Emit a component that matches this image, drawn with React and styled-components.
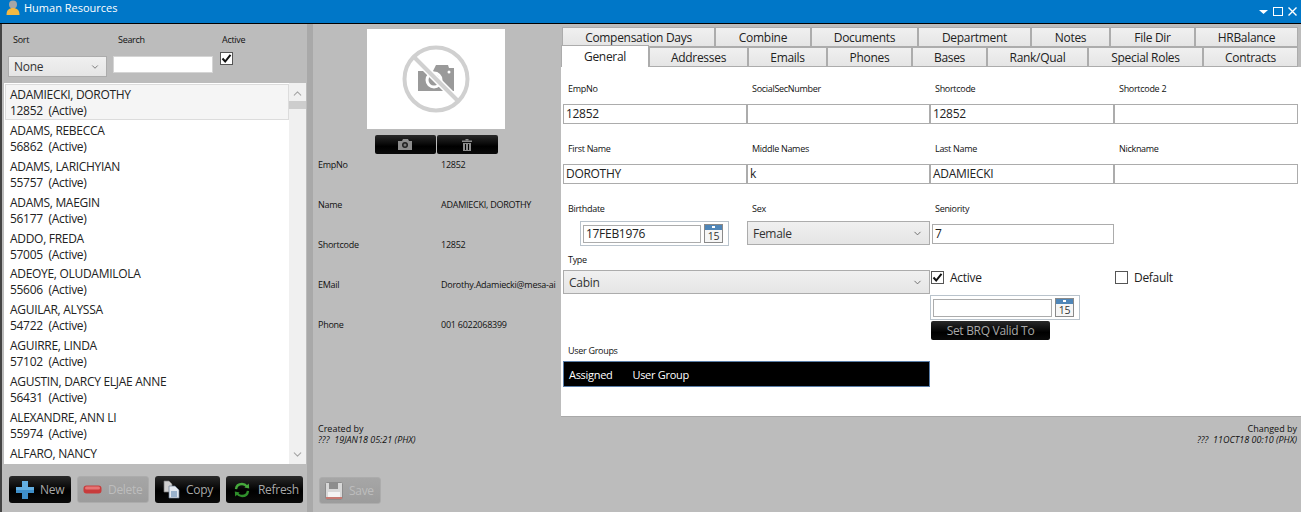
import styled, { createGlobalStyle } from "styled-components";
import { ChevronDown, ChevronUp } from "lucide-react";

const GlobalStyle = createGlobalStyle`
  html, body {
    margin: 0;
    padding: 0;
    background: #bcbcbc;
    font-family: "Open Sans", "Noto Sans", sans-serif;
    letter-spacing: -0.3px;
    overflow: hidden;
  }
`;

const people = [
  ["ADAMIECKI, DOROTHY", "12852"],
  ["ADAMS, REBECCA", "56862"],
  ["ADAMS, LARICHYIAN", "55757"],
  ["ADAMS, MAEGIN", "56177"],
  ["ADDO, FREDA", "57005"],
  ["ADEOYE, OLUDAMILOLA", "55606"],
  ["AGUILAR, ALYSSA", "54722"],
  ["AGUIRRE, LINDA", "57102"],
  ["AGUSTIN, DARCY ELJAE ANNE", "56431"],
  ["ALEXANDRE, ANN LI", "55974"],
  ["ALFARO, NANCY"],
];

const topTabs = [
  ["Compensation Days", 153],
  ["Combine", 96],
  ["Documents", 107],
  ["Department", 113],
  ["Notes", 79],
  ["File Dir", 85],
  ["HRBalance", 103],
];

const bottomTabs = [
  ["Addresses", 99],
  ["Emails", 79],
  ["Phones", 85],
  ["Bases", 75],
  ["Rank/Qual", 101],
  ["Special Roles", 115],
  ["Contracts", 95],
];

const summary = [
  ["EmpNo", "12852"],
  ["Name", "ADAMIECKI, DOROTHY"],
  ["Shortcode", "12852"],
  ["EMail", "Dorothy.Adamiecki@mesa-ai"],
  ["Phone", "001 6022068399"],
];

const Page = styled.div`
  width: 1301px;
  height: 512px;
  display: flex;
  flex-direction: column;
  overflow: hidden;
  background: #bcbcbc;
`;

const TitleBar = styled.div`
  height: 24px;
  flex: none;
  display: flex;
  align-items: center;
  padding: 0 4px 8px 6px;
  box-sizing: border-box;
  background: #0077c8;
  border-bottom: 1px solid #000;
  color: #fff;
  font-size: 11px;
`;

const TitleText = styled.span`
  margin-left: 4px;
  flex: 1;
  letter-spacing: 0;
`;

const WindowButtons = styled.div`
  display: flex;
  align-items: center;
  gap: 5px;
  margin-top: 8px;
`;

const Body = styled.div`
  flex: 1;
  min-height: 0;
  display: flex;
  border-left: 2px solid #444;
`;

const LeftPanel = styled.div`
  width: 305px;
  flex: none;
  display: flex;
  flex-direction: column;
  background: #bcbcbc;
`;

const Splitter = styled.div`
  width: 6px;
  flex: none;
  background: #a9a9a9;
`;

const Filters = styled.div`
  height: 59px;
  flex: none;
  display: grid;
  grid-template-columns: 105px 107px 1fr;
  padding-left: 6px;
`;

const SmallLabel = styled.div`
  font-size: 9px;
  line-height: 12px;
  color: #111;
`;

const FilterCol = styled.div`
  display: flex;
  flex-direction: column;
  padding-top: 10px;

  ${SmallLabel} {
    margin-left: 5px;
    height: 22px;
  }
`;

const ActiveCol = styled(FilterCol)`
  ${SmallLabel} {
    margin-left: 2px;
    height: 18px;
  }
`;

const Dropdown = styled.div`
  height: ${(p) => p.$height || 24}px;
  width: ${(p) => (p.$width ? `${p.$width}px` : "auto")};
  box-sizing: border-box;
  display: flex;
  align-items: center;
  justify-content: space-between;
  padding: 0 6px 0 5px;
  border: 1px solid #acacac;
  background: linear-gradient(#f0f0f0, #e5e5e5);
  color: #333;
  font-size: 12px;
`;

const SearchBox = styled.div`
  width: 100px;
  height: 17px;
  background: #fff;
  border: 1px solid #d5d5d5;
  box-sizing: border-box;
`;

const Check = styled.div`
  width: 13px;
  height: 13px;
  box-sizing: border-box;
  border: 1px solid #555;
  background: #fff;
  display: flex;
  align-items: center;
  justify-content: center;
  flex: none;
`;

const ListFrame = styled.div`
  height: 381px;
  flex: none;
  margin: 0 1px 0 2px;
  background: #fff;
  display: flex;
  overflow: hidden;
`;

const ListItems = styled.div`
  flex: 1;
  overflow: hidden;
  padding-top: 1px;
`;

const ListItem = styled.div`
  height: 35.9px;
  box-sizing: border-box;
  padding: 3px 0 0 5px;
  font-size: 12px;
  line-height: 16px;
  color: #222;
  background: ${(p) => (p.$selected ? "#f5f5f5" : "#fff")};
  box-shadow: ${(p) => (p.$selected ? "inset 0 0 0 1px #dcdcdc" : "none")};
  margin-left: 1px;
`;

const ItemSub = styled.div`
  white-space: pre;
`;

const ScrollTrack = styled.div`
  width: 17px;
  flex: none;
  background: #f0f0f0;
  display: flex;
  flex-direction: column;
  align-items: center;
  color: #a6a6a6;
`;

const ScrollThumb = styled.div`
  width: 100%;
  height: 8px;
  margin-top: 1px;
  background: #cdcdcd;
`;

const ScrollSpacer = styled.div`
  flex: 1;
`;

const ScrollArrow = styled.div`
  height: 14px;
  margin: ${(p) => (p.$down ? "0 0 3px" : "3px 0 0")};
  display: flex;
  align-items: center;
`;

const ActionRow = styled.div`
  display: flex;
  gap: 6px;
  padding: 12px 0 0 7px;
`;

const ActionButton = styled.div`
  width: ${(p) => p.$width}px;
  height: 27px;
  box-sizing: border-box;
  border-radius: 3px;
  display: flex;
  align-items: center;
  gap: ${(p) => p.$gap || 6}px;
  padding-left: ${(p) => p.$pad || 7}px;
  font-size: 12px;
  color: ${(p) => (p.$disabled ? "#bdbdbd" : "#a8a8a8")};
  background: ${(p) =>
    p.$disabled
      ? "linear-gradient(#a6a6a6, #9c9c9c)"
      : "linear-gradient(#2a2a2a, #000 55%, #0a0a0a)"};
  border: ${(p) => (p.$disabled ? "1px solid #acacac" : "none")};
`;

const MainPanel = styled.div`
  flex: 1;
  min-width: 0;
  display: flex;
  flex-direction: column;
`;

const MainTop = styled.div`
  height: 393px;
  flex: none;
  display: flex;
`;

const SummaryCol = styled.div`
  width: 248px;
  flex: none;
  display: flex;
  flex-direction: column;
  padding-left: 5px;
  box-sizing: border-box;
  overflow: hidden;
`;

const PhotoBlock = styled.div`
  display: flex;
  flex-direction: column;
  align-items: center;
  padding-top: 5px;
  width: 138px;
  margin-left: 49px;
`;

const Photo = styled.div`
  width: 138px;
  height: 100px;
  background: #fff;
  flex: none;
  display: flex;
  align-items: center;
  justify-content: center;
`;

const PhotoButtons = styled.div`
  display: flex;
  gap: 1px;
  margin-top: 6px;
`;

const PhotoButton = styled.div`
  width: 61px;
  height: 19px;
  border-radius: 2px;
  background: linear-gradient(#2a2a2a, #000 60%, #0a0a0a);
  display: flex;
  align-items: center;
  justify-content: center;
`;

const SummaryRows = styled.div`
  display: flex;
  flex-direction: column;
  margin-top: 5px;
`;

const SummaryRow = styled.div`
  height: 40px;
  display: grid;
  grid-template-columns: 123px 1fr;
  white-space: nowrap;
  font-size: 9px;
  line-height: 12px;
  letter-spacing: -0.25px;
  color: #111;
`;

const TabArea = styled.div`
  flex: 1;
  min-width: 0;
  display: flex;
  flex-direction: column;
  padding-top: 3px;
`;

const TabRow = styled.div`
  display: flex;
  height: 20px;
  flex: none;
  align-items: flex-end;
  padding-left: ${(p) => p.$indent || 0}px;
`;

const Tab = styled.div`
  width: ${(p) => p.$width}px;
  height: ${(p) => (p.$active ? 22 : 20)}px;
  box-sizing: border-box;
  flex: none;
  display: flex;
  align-items: center;
  justify-content: center;
  font-size: 12px;
  color: #222;
  background: ${(p) =>
    p.$active ? "#fff" : "linear-gradient(#f0f0f0, #e5e5e5)"};
  border: 1px solid #acacac;
  border-bottom: ${(p) => (p.$active ? "none" : "1px solid #acacac")};
  position: ${(p) => (p.$active ? "relative" : "static")};
  z-index: ${(p) => (p.$active ? 2 : "auto")};
`;

const TabContent = styled.div`
  height: 350px;
  flex: none;
  box-sizing: border-box;
  background: #fff;
  border-bottom: 1px solid #a9a9a9;
  padding: 0 3px 0 2px;
  display: flex;
  flex-direction: column;
`;

const FormRow = styled.div`
  display: grid;
  grid-template-columns: 184px 183px 184px 184px;
  height: ${(p) => p.$height}px;
`;

const FieldCol = styled.div`
  display: flex;
  flex-direction: column;
  align-items: ${(p) => p.$align || "stretch"};
  grid-column: ${(p) => (p.$span ? `span ${p.$span}` : "auto")};
`;

const FieldLabel = styled(SmallLabel)`
  height: ${(p) => p.$gap || 21}px;
  flex: none;
  padding-left: 5px;
  margin-top: ${(p) => (p.$top === undefined ? 16 : p.$top)}px;
`;

const TextField = styled.div`
  height: 20px;
  box-sizing: border-box;
  border: 1px solid #acacac;
  background: #fff;
  padding-left: 2px;
  margin-left: ${(p) => p.$left || 0}px;
  font-size: 12px;
  line-height: 18px;
  color: #222;
`;

const DateFrame = styled.div`
  width: ${(p) => p.$width}px;
  height: 25px;
  margin-left: ${(p) => p.$left || 0}px;
  margin-top: ${(p) => p.$top || 0}px;
  box-sizing: border-box;
  display: flex;
  align-items: center;
  gap: 3px;
  padding: 0 5px 0 2px;
  border: 1px solid #b9c3cc;
  background: #fff;
`;

const DateInput = styled.div`
  flex: 1;
  height: 18px;
  box-sizing: border-box;
  border: 1px solid #acacac;
  padding-left: 2px;
  font-size: 12px;
  line-height: 16px;
  color: #222;
`;

const CheckLine = styled.div`
  display: flex;
  align-items: center;
  gap: 6px;
  font-size: 12px;
  color: #222;
  height: 13px;
  margin-top: 17px;
  margin-left: ${(p) => p.$left || 0}px;
`;

const DarkButton = styled.div`
  width: 119px;
  height: 19px;
  margin: 1px 0 0 1px;
  border-radius: 2px;
  background: linear-gradient(#2a2a2a, #000 60%, #0a0a0a);
  color: #a8a8a8;
  font-size: 12px;
  display: flex;
  align-items: center;
  justify-content: center;
`;

const GroupHeader = styled.div`
  height: 26px;
  width: 367px;
  background: #000;
  border: 1px solid #5a7ea8;
  color: #fff;
  font-size: 11px;
  display: flex;
  align-items: center;
  gap: 20px;
  padding-left: 5px;
  box-sizing: border-box;
`;

const FooterRow = styled.div`
  display: flex;
  justify-content: space-between;
  padding: 0 4px 0 5px;
  font-size: 9px;
  line-height: 11px;
  letter-spacing: 0;
  height: 54px;
  flex: none;
  color: #111;
`;

const FooterBlock = styled.div`
  text-align: ${(p) => p.$align || "left"};
  padding-top: 6px;
`;

const Italic = styled.div`
  font-style: italic;
  white-space: pre;
`;

const SaveRow = styled.div`
  padding: 6px 0 0 6px;
`;

const CheckMark = () => (
  <svg width="11" height="11" viewBox="0 0 11 11">
    <path d="M1.5 5.5 L4.2 8.5 L9.5 1.8" fill="none" stroke="#111" strokeWidth="2" />
  </svg>
);

const Calendar = () => (
  <svg width="19" height="19" viewBox="0 0 19 19">
    <rect x="0.5" y="0.5" width="18" height="18" fill="#f6f6f6" stroke="#8a8a8a" />
    <rect x="1" y="1" width="17" height="5" fill="#4f86b8" />
    <rect x="8" y="2" width="3" height="2" fill="#fff" />
    <text x="9.5" y="16" textAnchor="middle" fontSize="10.5" fontFamily="Open Sans" fill="#333">15</text>
  </svg>
);

const UserIcon = () => (
  <svg width="14" height="15" viewBox="0 0 14 15">
    <circle cx="7" cy="4.5" r="4" fill="#a6a6a6" />
    <path d="M0.5 15 C0.5 10 3 8 7 8 C11 8 13.5 10 13.5 15 Z" fill="#f4b942" />
  </svg>
);

const PlusIcon = () => (
  <svg width="18" height="18" viewBox="0 0 18 18">
    <path d="M6 0 H12 V6 H18 V12 H12 V18 H6 V12 H0 V6 H6 Z" fill="#3f8fc9" />
    <path d="M6 0 H12 V6 H18 V9 H0 V6 H6 Z" fill="#63aee0" />
  </svg>
);

const MinusIcon = () => (
  <svg width="19" height="9" viewBox="0 0 19 9">
    <rect x="0.5" y="0.5" width="18" height="8" rx="3" fill="#c83c3c" />
    <rect x="2" y="1.5" width="15" height="3" rx="1.5" fill="#e67474" />
  </svg>
);

const CopyIcon = () => (
  <svg width="17" height="19" viewBox="0 0 17 19">
    <path d="M1 1 H6 L9 4 V12 H1 Z" fill="#cfcfcf" stroke="#777" strokeWidth="0.7" />
    <path d="M6 6 H12 L16 10 V18 H6 Z" fill="#e2e8f0" stroke="#6b7c92" strokeWidth="0.7" />
    <path d="M8 12 H14 M8 14 H14 M8 16 H14" stroke="#4f7aa8" strokeWidth="1" />
  </svg>
);

const RefreshIcon = () => (
  <svg width="16" height="18" viewBox="0 0 20 20" fill="none">
    <path d="M2.5 9 C3 4.5 6 2.5 10 2.5 C12.5 2.5 14.5 3.5 16 5.5" stroke="#46a93c" strokeWidth="3" />
    <path d="M13 7 L19 8 L18.5 2 Z" fill="#46a93c" />
    <path d="M17.5 11 C17 15.5 14 17.5 10 17.5 C7.5 17.5 5.5 16.5 4 14.5" stroke="#2f8f2b" strokeWidth="3" />
    <path d="M7 13 L1 12 L1.5 18 Z" fill="#2f8f2b" />
  </svg>
);

const SaveIcon = () => (
  <svg width="18" height="18" viewBox="0 0 18 18">
    <rect x="0.5" y="0.5" width="17" height="17" rx="1" fill="#d8d8d8" stroke="#8c8c8c" />
    <rect x="4" y="1" width="9" height="6" fill="#8d8d8d" />
    <rect x="3" y="10" width="12" height="5" fill="#f4f4f4" />
    <rect x="1" y="15" width="16" height="2" fill="#c77a72" />
  </svg>
);

const NoPhoto = () => (
  <svg width="68" height="68" viewBox="0 0 68 68">
    <path d="M16 26 H31 L34 20 H46 L47 23 H52 V46 H16 Z" fill="#9a9a9a" />
    <circle cx="32" cy="35" r="8.5" fill="#fff" />
    <circle cx="32" cy="35" r="5.5" fill="#9a9a9a" />
    <circle cx="47" cy="27" r="1.5" fill="#fff" />
    <path d="M16 16 L52 52" stroke="#fff" strokeWidth="7" />
    <circle cx="34" cy="34" r="31.5" fill="none" stroke="#d0d0d0" strokeWidth="4" />
    <path d="M12 12 L56 56" stroke="#d0d0d0" strokeWidth="4" />
  </svg>
);

const CameraIcon = () => (
  <svg width="14" height="11" viewBox="0 0 14 11">
    <path d="M0 2 H4 L5 0 H10 L11 2 H14 V11 H0 Z" fill="#8d8d8d" />
    <circle cx="7" cy="6" r="3" fill="#222" />
    <circle cx="7" cy="6" r="1.5" fill="#777" />
  </svg>
);

const TrashIcon = () => (
  <svg width="10" height="12" viewBox="0 0 10 12">
    <rect x="0" y="1.5" width="10" height="1.5" fill="#8d8d8d" />
    <rect x="3.5" y="0" width="3" height="1.5" fill="#8d8d8d" />
    <path d="M1 4 H9 V12 H1 Z M3 5 V11 H4 V5 Z M6 5 V11 H7 V5 Z" fill="#8d8d8d" fillRule="evenodd" />
  </svg>
);

const Field = ({ label, value }) => (
  <FieldCol>
    <FieldLabel>{label}</FieldLabel>
    <TextField>{value}</TextField>
  </FieldCol>
);

const App = () => (
  <Page>
    <GlobalStyle />
    <TitleBar>
      <UserIcon />
      <TitleText>Human Resources</TitleText>
      <WindowButtons>
        <svg width="9" height="4" viewBox="0 0 9 4"><path d="M0 0 H9 L4.5 4 Z" fill="#fff" /></svg>
        <svg width="10" height="9" viewBox="0 0 10 9"><rect x="0.5" y="0.5" width="9" height="8" fill="none" stroke="#fff" /></svg>
        <svg width="9" height="9" viewBox="0 0 9 9"><path d="M0.5 0.5 L8.5 8.5 M8.5 0.5 L0.5 8.5" stroke="#fff" strokeWidth="1.4" /></svg>
      </WindowButtons>
    </TitleBar>
    <Body>
      <LeftPanel>
        <Filters>
          <FilterCol>
            <SmallLabel>Sort</SmallLabel>
            <Dropdown $width={99} $height={21}>
              None
              <ChevronDown size={10} color="#666" />
            </Dropdown>
          </FilterCol>
          <FilterCol>
            <SmallLabel>Search</SmallLabel>
            <SearchBox />
          </FilterCol>
          <ActiveCol>
            <SmallLabel>Active</SmallLabel>
            <Check><CheckMark /></Check>
          </ActiveCol>
        </Filters>
        <ListFrame>
          <ListItems>
            {people.map(([name, no], i) => (
              <ListItem key={name} $selected={i === 0}>
                <div>{name}</div>
                {no && <ItemSub>{no}  (Active)</ItemSub>}
              </ListItem>
            ))}
          </ListItems>
          <ScrollTrack>
            <ScrollArrow><ChevronUp size={13} /></ScrollArrow>
            <ScrollThumb />
            <ScrollSpacer />
            <ScrollArrow $down><ChevronDown size={13} /></ScrollArrow>
          </ScrollTrack>
        </ListFrame>
        <ActionRow>
          <ActionButton $width={62}><PlusIcon />New</ActionButton>
          <ActionButton $width={72} $pad={5} $disabled><MinusIcon />Delete</ActionButton>
          <ActionButton $width={65} $pad={8}><CopyIcon />Copy</ActionButton>
          <ActionButton $width={77} $pad={8} $gap={8}><RefreshIcon />Refresh</ActionButton>
        </ActionRow>
      </LeftPanel>
      <Splitter />
      <MainPanel>
        <MainTop>
          <SummaryCol>
            <PhotoBlock>
              <Photo><NoPhoto /></Photo>
              <PhotoButtons>
                <PhotoButton><CameraIcon /></PhotoButton>
                <PhotoButton><TrashIcon /></PhotoButton>
              </PhotoButtons>
            </PhotoBlock>
            <SummaryRows>
              {summary.map(([k, v]) => (
                <SummaryRow key={k}>
                  <div>{k}</div>
                  <div>{v}</div>
                </SummaryRow>
              ))}
            </SummaryRows>
          </SummaryCol>
          <TabArea>
            <TabRow $indent={1}>
              {topTabs.map(([t, w]) => (
                <Tab key={t} $width={w}>{t}</Tab>
              ))}
            </TabRow>
            <TabRow>
              <Tab $width={88} $active>General</Tab>
              {bottomTabs.map(([t, w]) => (
                <Tab key={t} $width={w}>{t}</Tab>
              ))}
            </TabRow>
            <TabContent>
              <FormRow $height={60}>
                <Field label="EmpNo" value="12852" />
                <Field label="SocialSecNumber" />
                <Field label="Shortcode" value="12852" />
                <Field label="Shortcode 2" />
              </FormRow>
              <FormRow $height={60}>
                <Field label="First Name" value="DOROTHY" />
                <Field label="Middle Names" value="k" />
                <Field label="Last Name" value="ADAMIECKI" />
                <Field label="Nickname" />
              </FormRow>
              <FormRow $height={67}>
                <FieldCol>
                  <FieldLabel $gap={18}>Birthdate</FieldLabel>
                  <DateFrame $width={149} $left={17}>
                    <DateInput>17FEB1976</DateInput>
                    <Calendar />
                  </DateFrame>
                </FieldCol>
                <FieldCol>
                  <FieldLabel $gap={18}>Sex</FieldLabel>
                  <Dropdown>
                    Female
                    <ChevronDown size={11} color="#666" />
                  </Dropdown>
                </FieldCol>
                <FieldCol>
                  <FieldLabel>Seniority</FieldLabel>
                  <TextField $left={2}>7</TextField>
                </FieldCol>
              </FormRow>
              <FormRow $height={91}>
                <FieldCol $span={2}>
                  <FieldLabel $gap={16} $top={0}>Type</FieldLabel>
                  <Dropdown>
                    Cabin
                    <ChevronDown size={11} color="#666" />
                  </Dropdown>
                </FieldCol>
                <FieldCol $align="flex-start">
                  <CheckLine $left={1}>
                    <Check><CheckMark /></Check>
                    Active
                  </CheckLine>
                  <DateFrame $width={150} $top={11}>
                    <DateInput />
                    <Calendar />
                  </DateFrame>
                  <DarkButton>Set BRQ Valid To</DarkButton>
                </FieldCol>
                <FieldCol $align="flex-start">
                  <CheckLine $left={1}>
                    <Check />
                    Default
                  </CheckLine>
                </FieldCol>
              </FormRow>
              <FieldLabel $gap={16} $top={0}>User Groups</FieldLabel>
              <GroupHeader>
                <span>Assigned</span>
                <span>User Group</span>
              </GroupHeader>
            </TabContent>
          </TabArea>
        </MainTop>
        <FooterRow>
          <FooterBlock>
            <div>Created by</div>
            <Italic>???  19JAN18 05:21 (PHX)</Italic>
          </FooterBlock>
          <FooterBlock $align="right">
            <div>Changed by</div>
            <Italic>???  11OCT18 00:10 (PHX)</Italic>
          </FooterBlock>
        </FooterRow>
        <SaveRow>
          <ActionButton $width={62} $disabled $pad={5}><SaveIcon />Save</ActionButton>
        </SaveRow>
      </MainPanel>
    </Body>
  </Page>
);

export default App;
